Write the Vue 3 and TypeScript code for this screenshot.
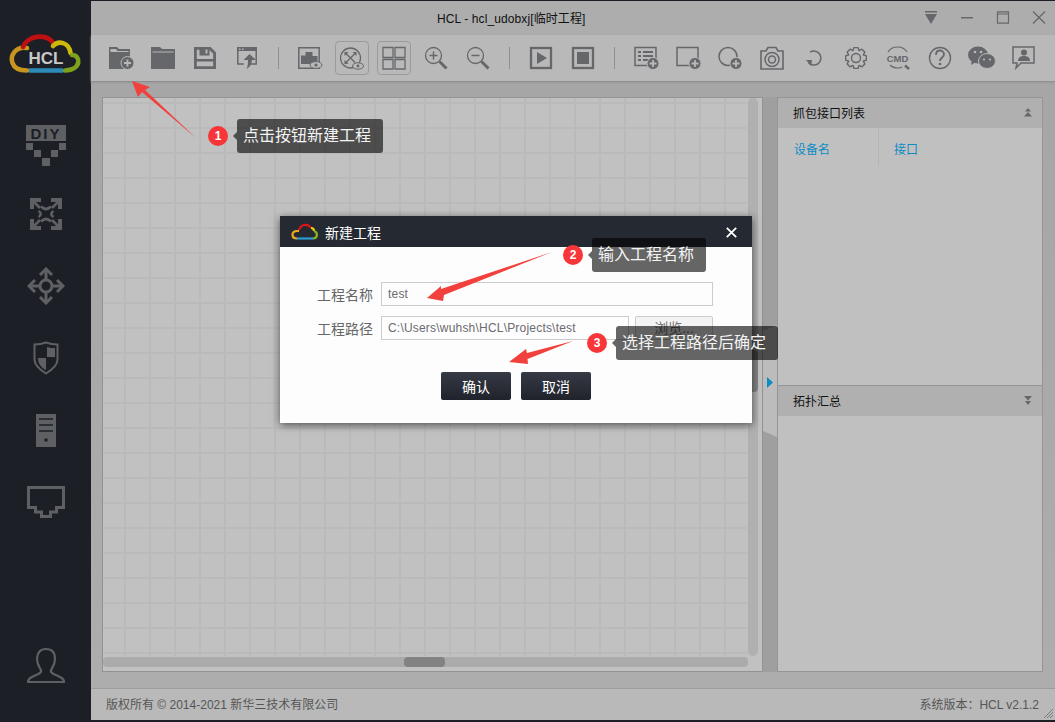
<script setup lang="ts">
const grey = '#66676b'
const bar = '#b9b9b9'

// 8 tooth outline for the settings icon
function gearPath(cx: number, cy: number, outer: number, inner: number): string {
  const pts: string[] = []
  for (let i = 0; i < 8; i++) {
    const a = (i * Math.PI) / 4
    const steps: [number, number][] = [
      [inner, a - 0.39],
      [outer, a - 0.2],
      [outer, a + 0.2],
      [inner, a + 0.39]
    ]
    for (const [r, t] of steps) {
      pts.push(`${(cx + r * Math.cos(t)).toFixed(1)} ${(cy + r * Math.sin(t)).toFixed(1)}`)
    }
  }
  return 'M' + pts.join('L') + 'Z'
}
const gear = gearPath(11, 11, 10.6, 8)
</script>

<template>
  <div class="app">
    <aside class="side">
      <svg class="logo" width="72" height="42" viewBox="0 0 72 42" fill="none" stroke-width="4.6">
        <path d="M17 15C5 13 0 23 2.500 30 4.500 36 10 37.500 17 37.500" stroke="#c8951f" stroke-linecap="round" />
        <path d="M13 14C17 3 36-1 44 11" stroke="#be0f12" stroke-linecap="round" />
        <path d="M43 13C48 7 59 9 60.500 20" stroke="#ccb90b" stroke-linecap="round" />
        <path d="M62 22C71 22 72 37 55 37.500" stroke="#7ea21c" stroke-linecap="round" />
        <path d="M19 37.500H53" stroke="#2d8bb8" />
        <text x="36" y="31" text-anchor="middle" class="logo-text">HCL</text>
      </svg>

      <div class="side-icons">
        <div class="side-item first">
          <svg class="diy-icon" width="42" height="41" viewBox="0 0 42 41">
            <rect x="1" y="0" width="40" height="16" fill="#5f6064" />
            <text x="21" y="13.500" text-anchor="middle" class="diy">DIY</text>
            <path fill="#5f6064" d="M1 18h7v7H1zM34 18h7v7h-7zM9 25h7v7H9zM26 25h7v7h-7zM17 33h8v8h-8z" />
          </svg>
        </div>
        <div class="side-item">
          <svg width="32" height="32" viewBox="0 0 32 32" fill="none" stroke="#5f6064" stroke-width="2.600">
            <path fill="#5f6064" stroke="none" d="M0 0h11v4H4v7H0zM32 0H21v4h7v7h4zM0 32h11v-4H4v-7H0zM32 32H21v-4h7v-7h4z" />
            <path d="M3 3l7 7M29 3l-7 7M3 29l7-7M29 29l-7-7" />
            <path d="M11 8.500Q16 13.500 21 8.500M11 23.500Q16 18.500 21 23.500M8.500 13Q13 16 8.500 19M23.500 13Q19 16 23.500 19" />
          </svg>
        </div>
        <div class="side-item">
          <svg width="38" height="38" viewBox="0 0 38 38" fill="none" stroke="#5f6064" stroke-width="3">
            <circle cx="19" cy="19" r="6" />
            <path d="M19 3v10M19 25v10M3 19h10M25 19h10" />
            <path d="M13 8l6-6 6 6M13 30l6 6 6-6M8 13l-6 6 6 6M30 13l6 6-6 6" />
          </svg>
        </div>
        <div class="side-item">
          <svg width="26" height="34" viewBox="0 0 26 34">
            <path fill="none" stroke="#5f6064" stroke-width="2" d="M13 1.500c4 1.500 8 2 11.500 2v15c0 6-5 10-11.500 14C6.500 28.500 1.500 24.500 1.500 18.500v-15C5 3.500 9 3 13 1.500z" />
            <path fill="#5f6064" d="M14 6c3 1 5 1 8 1v9h-8zM5 17h8v12c-4-2-8-6-8-12z" />
          </svg>
        </div>
        <div class="side-item">
          <svg width="20" height="33" viewBox="0 0 20 33">
            <rect width="20" height="33" fill="#5f6064" />
            <path d="M3 5h14M3 11h14M3 17h14" stroke="#1c1f25" stroke-width="1.500" />
            <circle cx="10" cy="26" r="1.800" fill="#1c1f25" />
          </svg>
        </div>
        <div class="side-item">
          <svg width="38" height="32" viewBox="0 0 38 32">
            <path fill="none" stroke="#5f6064" stroke-width="3" d="M1.500 1.500h35v20h-7v4.500h-6v4.500h-9V26h-6v-4.500h-7z" />
          </svg>
        </div>
      </div>

      <svg class="user" width="38" height="37" viewBox="0 0 38 37">
        <path fill="none" stroke="#5f6064" stroke-width="2.200" stroke-linejoin="round" d="M19 2c6 0 9 4 9 10 0 6-3 9-4 11-1 3 3 4 7 6 4 2 6 3 6 6H1c0-3 2-4 6-6s8-3 7-6c-1-2-4-5-4-11 0-6 3-10 9-10z" />
      </svg>
    </aside>

    <div class="main">
      <header class="titlebar">
        <span class="title">HCL - hcl_udobxj[临时工程]</span>
        <div class="win-btns">
          <svg width="14" height="13" viewBox="0 0 14 13"><path :fill="grey" d="M1 0h12v1.500H1zM1 3h12L7 13z" /></svg>
          <svg width="14" height="13" viewBox="0 0 14 13"><path :fill="grey" d="M1 6h12v1.500H1z" /></svg>
          <svg width="14" height="13" viewBox="0 0 14 13"><path fill="none" :stroke="grey" stroke-width="1.200" d="M1.500.8v11.400h11V.8zM1.500 3h11" /></svg>
          <svg width="14" height="13" viewBox="0 0 14 13"><path fill="none" :stroke="grey" stroke-width="1.300" d="M1 .5l12 12M13 .5l-12 12" /></svg>
        </div>
      </header>

      <nav class="toolbar">
        <div class="tool"><svg width="26" height="24" viewBox="0 0 26 24"><path :fill="grey" d="M1 1h8l2 2h11v20H1z" /><path :fill="bar" d="M2.500 3h5.500l1.500 2h11v1H2.500z" /><circle cx="19.500" cy="17" r="6.500" :fill="grey" :stroke="bar" /><path d="M16 17h7M19.500 13.500v7" :stroke="bar" stroke-width="1.800" /></svg></div>
        <div class="tool"><svg width="26" height="24" viewBox="0 0 26 24"><path :fill="grey" d="M1 1h9l2 2h13v20H1z" /><path :fill="bar" d="M2.500 5.500h21v1h-21z" /></svg></div>
        <div class="tool"><svg width="24" height="24" viewBox="0 0 24 24"><path fill="none" :stroke="grey" stroke-width="2.800" d="M2.400 2.400h14.600l4.600 4.600v14.600H2.400z" /><path :fill="grey" d="M6.500 2h10v7.500h-10zM2 13h20v2.400H2z" /><path :fill="bar" d="M12.500 3.500h2v4h-2z" /></svg></div>
        <div class="tool"><svg width="24" height="24" viewBox="0 0 24 24"><path :fill="grey" d="M2 1h20v4H2z" /><path :fill="bar" d="M4 2.500h1.500V4H4zM7 2.500h1.500V4H7z" /><path fill="none" :stroke="grey" stroke-width="1.500" d="M2.800 4v14h6M21.200 4v14h-6" /><path :fill="grey" d="M14.500 8l6.500 6h-4c0 4-2 7-5.500 9 1.500-3 1.500-6 1.500-9H8.500z" /></svg></div>
        <i class="sep"></i>
        <div class="tool"><svg width="26" height="24" viewBox="0 0 26 24"><path fill="none" :stroke="grey" stroke-width="1.500" d="M1.800 1.800h20.400v20.400H1.800z" /><path :fill="grey" d="M4 9.500h4.500V6h7v4h5v8H4z" /><ellipse cx="19" cy="19" rx="6" ry="3.400" :fill="bar" :stroke="grey" /><circle cx="19" cy="19" r="1.600" :fill="grey" /></svg></div>
        <div class="tool boxed"><svg width="24" height="24" viewBox="0 0 24 24"><circle cx="10.500" cy="12" r="10" fill="none" :stroke="grey" stroke-width="1.300" /><path fill="none" :stroke="grey" stroke-width="1.300" d="M6 7.500l9 9M15 7.500l-9 9" /><path :fill="grey" d="M4.500 6h4l-4 4zM16.500 6h-4l4 4zM4.500 18h4l-4-4z" /><ellipse cx="18" cy="20" rx="5.500" ry="3.200" :fill="bar" :stroke="grey" /><circle cx="18" cy="20" r="1.400" :fill="grey" /></svg></div>
        <div class="tool boxed"><svg width="24" height="24" viewBox="0 0 24 24"><path fill="none" :stroke="grey" stroke-width="1.300" d="M1 1.500h10v10H1zM13 1.500h10v10H13zM1 13.500h10v9.500H1zM13 13.500h10v9.500H13z" /></svg></div>
        <div class="tool"><svg width="24" height="24" viewBox="0 0 24 24"><circle cx="9.500" cy="9.500" r="8" fill="none" :stroke="grey" stroke-width="1.300" /><path :stroke="grey" stroke-width="1.500" d="M5.500 9.500h8M9.500 5.500v8" /><path :stroke="grey" stroke-width="3" d="M15.500 15.500l7 7" /></svg></div>
        <div class="tool"><svg width="24" height="24" viewBox="0 0 24 24"><circle cx="9.500" cy="9.500" r="8" fill="none" :stroke="grey" stroke-width="1.300" /><path :stroke="grey" stroke-width="1.500" d="M5.500 9.500h8" /><path :stroke="grey" stroke-width="3" d="M15.500 15.500l7 7" /></svg></div>
        <i class="sep"></i>
        <div class="tool"><svg width="24" height="24" viewBox="0 0 24 24"><rect x="2" y="2" width="20" height="20" fill="none" :stroke="grey" stroke-width="2.300" /><path :fill="grey" d="M8 6l10 6-10 6z" /></svg></div>
        <div class="tool"><svg width="24" height="24" viewBox="0 0 24 24"><rect x="2" y="2" width="20" height="20" fill="none" :stroke="grey" stroke-width="2.300" /><rect x="6" y="6" width="12" height="12" :fill="grey" /></svg></div>
        <i class="sep"></i>
        <div class="tool"><svg width="26" height="24" viewBox="0 0 26 24"><path fill="none" :stroke="grey" stroke-width="1.500" d="M2 1.500h21v18H2z" /><path :stroke="grey" stroke-width="1.800" d="M5 6h3M10 6h10M5 10h3M10 10h10M5 14h3M10 14h5" /><circle cx="20" cy="17.500" r="6" :fill="grey" :stroke="bar" /><path d="M16.500 17.500h7M20 14v7" :stroke="bar" stroke-width="1.800" /></svg></div>
        <div class="tool"><svg width="26" height="24" viewBox="0 0 26 24"><path fill="none" :stroke="grey" stroke-width="1.500" d="M2 1.500h21v18H2z" /><circle cx="20" cy="17.500" r="6" :fill="grey" :stroke="bar" /><path d="M16.500 17.500h7M20 14v7" :stroke="bar" stroke-width="1.800" /></svg></div>
        <div class="tool"><svg width="26" height="24" viewBox="0 0 26 24"><circle cx="11" cy="10.500" r="9" fill="none" :stroke="grey" stroke-width="1.500" /><circle cx="19" cy="17.500" r="6" :fill="grey" :stroke="bar" /><path d="M15.500 17.500h7M19 14v7" :stroke="bar" stroke-width="1.800" /></svg></div>
        <div class="tool"><svg width="24" height="24" viewBox="0 0 24 24"><path fill="none" :stroke="grey" stroke-width="1.600" d="M1 5h5l2-3.500h8L18 5h5v18H1z" /><circle cx="12" cy="13.500" r="7" fill="none" :stroke="grey" stroke-width="1.500" /><circle cx="12" cy="13.500" r="3.500" fill="none" :stroke="grey" stroke-width="1.500" /></svg></div>
        <div class="tool"><svg width="18" height="18" viewBox="0 0 18 18"><path fill="none" :stroke="grey" stroke-width="1.500" d="M5 3.200A7 7 0 1 1 3.500 13.500" /><path :fill="grey" d="M1 11h6l-1 6z" /></svg></div>
        <div class="tool"><svg width="22" height="22" viewBox="0 0 22 22"><circle cx="11" cy="11" r="4.500" fill="none" :stroke="grey" stroke-width="1.400" /><path fill="none" :stroke="grey" stroke-width="1.400" stroke-linejoin="round" :d="gear" /></svg></div>
        <div class="tool"><svg width="26" height="24" viewBox="0 0 26 24"><text x="12.500" y="15.500" text-anchor="middle" class="cmd">CMD</text><path fill="none" :stroke="grey" stroke-width="1.200" d="M3 6C5 2.500 9 1 12.500 1S20 2.500 22 6M5 19c2 2 5 3 8 3 1.500 0 3-.3 4-1" /><path :stroke="grey" stroke-width="2.400" d="M20 19.500l4 3.500" /></svg></div>
        <div class="tool"><svg width="24" height="24" viewBox="0 0 24 24"><circle cx="12" cy="12" r="10.500" fill="none" :stroke="grey" stroke-width="1.400" /><path fill="none" :stroke="grey" stroke-width="1.800" d="M8 9c0-3 2-4.500 4-4.500S16 6 16 8.500c0 3-4 3-4 6.500" /><circle cx="12" cy="18" r="1.300" :fill="grey" /></svg></div>
        <div class="tool"><svg width="28" height="24" viewBox="0 0 28 24"><ellipse cx="10" cy="9" rx="10" ry="8.500" :fill="grey" /><path :fill="grey" d="M4 14l-1 5 5-3z" /><ellipse cx="19" cy="15" rx="8.500" ry="7.500" :fill="grey" :stroke="bar" /><circle cx="7" cy="6" r="1.300" :fill="bar" /><circle cx="13" cy="6" r="1.300" :fill="bar" /><circle cx="16" cy="13.500" r="1.100" :fill="bar" /><circle cx="22" cy="13.500" r="1.100" :fill="bar" /></svg></div>
        <div class="tool"><svg width="24" height="24" viewBox="0 0 24 24"><path fill="none" :stroke="grey" stroke-width="1.500" d="M1 1h21v16H9l-5 5 1-5H1z" /><circle cx="12" cy="6.500" r="3" :fill="grey" /><path :fill="grey" d="M6 15c0-4 3-5 6-5s6 1 6 5z" /></svg></div>
      </nav>

      <section class="workspace">
        <div class="canvas">
          <div class="grid"></div>
          <div class="vbar"><i class="vthumb"></i></div>
          <div class="hbar"><i class="hthumb"></i></div>
        </div>

        <div class="splitter">
          <i class="handle"></i>
          <svg class="tri" width="6" height="11" viewBox="0 0 6 11"><path fill="#0b8cc5" d="M0 0l6 5.500L0 11z" /></svg>
        </div>

        <div class="panel">
          <div class="panel-top">
            <div class="panel-head">
              <span>抓包接口列表</span>
              <svg width="8" height="9" viewBox="0 0 8 9"><path :fill="grey" d="M4 0l3 3.500H1zM4 4l4 4.500H0z" /></svg>
            </div>
            <div class="cols">
              <div class="col first">设备名</div>
              <div class="col">接口</div>
            </div>
          </div>
          <div class="panel-bottom">
            <div class="panel-head">
              <span>拓扑汇总</span>
              <svg width="8" height="9" viewBox="0 0 8 9"><path :fill="grey" d="M0 0h8L4 4.500zM1 5h6L4 9z" /></svg>
            </div>
          </div>
        </div>
      </section>

      <footer class="status">
        <span>版权所有 © 2014-2021 新华三技术有限公司</span>
        <span class="ver">系统版本：HCL v2.1.2</span>
        <svg class="grip" width="9" height="9" viewBox="0 0 9 9"><path stroke="#7d7d7d" d="M0 9l9-9M3 9l6-6M6 9l3-3" /></svg>
      </footer>
    </div>

    <div class="dialog">
      <div class="dlg-head">
        <svg width="28" height="18" viewBox="0 0 28 18" fill="none" stroke-width="2.200">
          <path d="M6 15.500C0 15.500 0 8 6 8h2" stroke="#f0a81c" />
          <path d="M8 7C10 1 17 0 20 5" stroke="#d5161b" />
          <path d="M20 5c2 0 3 1 3 3" stroke="#e6d00f" />
          <path d="M23 8c4 1 4 7.500-1 7.500" stroke="#8ab51f" />
          <path d="M6 15.500h16" stroke="#2d9bd6" />
        </svg>
        <span class="dlg-title">新建工程</span>
        <svg class="dlg-close" width="11" height="11" viewBox="0 0 11 11"><path stroke="#fff" stroke-width="1.800" d="M.8.8l9.400 9.400M10.200.8L.8 10.200" /></svg>
      </div>
      <div class="dlg-body">
        <div class="row">
          <label>工程名称</label>
          <div class="input wide">test</div>
        </div>
        <div class="row">
          <label>工程路径</label>
          <div class="input path">C:\Users\wuhsh\HCL\Projects\test</div>
          <div class="browse">浏览...</div>
        </div>
        <div class="btns">
          <button class="btn">确认</button>
          <button class="btn">取消</button>
        </div>
      </div>
    </div>

    <svg class="arrows" width="1055" height="722" viewBox="0 0 1055 722">
      <path fill="#f2403c" d="M196 138L145 90l5-3-18-6 6 16 4-5z" />
      <path fill="#f2403c" d="M552 252L441 289l0-3-14 12 16 3 1-6z" />
      <path fill="#f2403c" d="M573 341l-46 12-1-4-17 13 19 2-.5-5z" />
    </svg>

    <div class="tip t1"><b class="num">1</b><span class="bubble">点击按钮新建工程</span></div>
    <div class="tip t2"><b class="num">2</b><span class="bubble">输入工程名称</span></div>
    <div class="tip t3"><b class="num">3</b><span class="bubble">选择工程路径后确定</span></div>
  </div>
</template>

<style>
html, body { margin: 0; background: #1c1f25; }
</style>

<style scoped>
* { box-sizing: border-box; }
.app {
  position: relative;
  width: 1055px;
  height: 722px;
  display: flex;
  overflow: hidden;
  font-family: "Liberation Sans", "Noto Sans CJK SC", sans-serif;
  font-size: 12px;
  background: #1c1f25;
}
.side {
  width: 91px;
  flex: none;
  background: #1c1f25;
  display: flex;
  flex-direction: column;
  align-items: center;
  padding-top: 33px;
}
.logo { overflow: visible; }
.logo-text { font: bold 17px "Liberation Sans", sans-serif; fill: #c9c9c9; stroke: none; }
.diy { font: bold 15px "Liberation Sans", sans-serif; fill: #1c1f25; letter-spacing: 2px; }
.cmd { font: bold 9.500px "Liberation Sans", sans-serif; fill: #66676b; }
.side-icons { margin-top: 35px; display: flex; flex-direction: column; }
.side-item { height: 72px; width: 91px; display: flex; justify-content: center; align-items: center; }
.side-item.first { height: 68px; }
.diy-icon { margin-top: 2px; }
.user { margin-top: auto; margin-bottom: 38px; }
.main {
  flex: 1;
  display: flex;
  flex-direction: column;
  margin: 1px 0 2px;
  background: #acacac;
  min-width: 0;
}
.titlebar {
  height: 34px;
  flex: none;
  background: #adadad;
  display: flex;
  align-items: center;
  padding: 0 9px 2px 0;
}
.title { margin-left: 346px; font-size: 12px; letter-spacing: 0.1px; color: #111; }
.win-btns { margin-left: auto; display: flex; gap: 22px; }
.toolbar {
  height: 47px;
  flex: none;
  background: #b9b9b9;
  border-bottom: 1px solid #8e8e8e;
  box-shadow: 0 1px 2px #9a9a9a;
  display: flex;
  align-items: center;
  padding-left: 9px;
  position: relative;
}
.tool { width: 42px; height: 34px; display: flex; align-items: center; justify-content: center; flex: none; }
.tool.boxed { width: 34px; margin: 0 4px; border: 1px solid #9b9b9b; border-radius: 4px; }
.sep { width: 1px; height: 22px; background: #8f8f8f; margin: 0 10px; flex: none; }
.workspace {
  flex: 1;
  display: flex;
  padding: 15px 12px 16px 11px;
  min-height: 0;
  background: linear-gradient(#a6a6a6, #adadad);
}
.canvas {
  width: 661px;
  flex: none;
  position: relative;
  border: 1px solid #939393;
  background: #c1c1c1;
  overflow: hidden;
}
.grid {
  position: absolute;
  inset: 0 15px 15px 0;
  background-image:
    linear-gradient(90deg, #bababa 2px, transparent 2px),
    linear-gradient(#bababa 2px, transparent 2px);
  background-size: 25px 25px;
  background-position: 21px 4px;
}
.vbar {
  position: absolute;
  right: 4px;
  top: 0;
  bottom: 15px;
  width: 10px;
  background: #b0b0b0;
  border-radius: 5px;
}
.vthumb { position: absolute; left: 0; right: 0; top: 252px; height: 42px; background: #828282; border-radius: 4px; }
.hbar {
  position: absolute;
  left: 0;
  right: 14px;
  bottom: 4px;
  height: 10px;
  background: #ababab;
  border-radius: 4px;
}
.hthumb { position: absolute; left: 301px; width: 41px; top: 0; bottom: 0; background: #828282; border-radius: 4px; }
.splitter {
  width: 14px;
  flex: none;
  position: relative;
  background: #9f9f9f;
}
.handle {
  position: absolute;
  left: 0;
  right: 0;
  top: 228px;
  height: 112px;
  background: #bcbcbc;
  clip-path: polygon(0 6px, 100% 0, 100% 100%, 0 calc(100% - 6px));
}
.tri { position: absolute; left: 4px; top: 280px; }
.panel {
  width: 266px;
  flex: none;
  border: 1px solid #959595;
  background: #c0c0c0;
  display: flex;
  flex-direction: column;
}
.panel-top { height: 288px; border-bottom: 1px solid #959595; }
.panel-head {
  height: 30px;
  background: #b0b0b0;
  display: flex;
  align-items: center;
  justify-content: space-between;
  padding: 0 10px 2px 15px;
  color: #111;
  font-size: 12px;
}
.cols { display: flex; height: 38px; }
.col { color: #0b8cc5; padding: 12px 0 0 15px; width: 100px; font-size: 12px; }
.col.first { width: 101px; padding-left: 16px; border-right: 1px solid #b4b4b4; }
.panel-bottom { flex: 1; }
.status {
  height: 32px;
  flex: none;
  background: #b9b9b9;
  border-top: 1px solid #9d9d9d;
  display: flex;
  align-items: center;
  justify-content: space-between;
  padding: 0 16px 2px 15px;
  color: #555;
  font-size: 12px;
  position: relative;
}
.grip { position: absolute; right: 2px; bottom: 2px; }
.dialog {
  position: absolute;
  left: 280px;
  top: 216px;
  width: 472px;
  height: 207px;
  background: #fdfdfd;
  box-shadow: 0 2px 8px rgba(0, 0, 0, 0.6);
}
.dlg-head {
  height: 31px;
  background: #252932;
  display: flex;
  align-items: center;
  padding: 0 15px 0 11px;
}
.dlg-title { color: #fff; font-size: 14px; margin-left: 6px; }
.dlg-close { margin-left: auto; margin-top: 1px; }
.dlg-body { padding: 35px 39px 0 37px; }
.row { display: flex; align-items: center; height: 24px; margin-bottom: 10px; }
.row label { width: 56px; margin-right: 8px; font-size: 14px; color: #666; flex: none; }
.input {
  height: 24px;
  border: 1px solid #ccc;
  line-height: 22px;
  padding-left: 6px;
  color: #6b6b70;
  font-size: 12px;
  letter-spacing: 0.2px;
}
.input.wide { flex: 1; }
.input.path { width: 248px; }
.browse {
  width: 78px;
  height: 24px;
  margin-left: 6px;
  border: 1px solid #ccc;
  border-radius: 2px;
  background: #f3f3f3;
  color: #777;
  font-size: 14px;
  line-height: 22px;
  text-align: center;
}
.btns { display: flex; justify-content: center; gap: 10px; margin-top: 32px; padding-left: 2px; }
.btn {
  width: 70px;
  height: 28px;
  border: 0;
  border-radius: 2px;
  background: linear-gradient(#363a45, #20232b);
  color: #fff;
  font: 14px "Liberation Sans", "Noto Sans CJK SC", sans-serif;
}
.arrows { position: absolute; left: 0; top: 0; pointer-events: none; }
.tip { position: absolute; display: flex; align-items: center; }
.t1 { left: 208px; top: 119px; }
.t2 { left: 563px; top: 238px; }
.t3 { left: 587px; top: 326px; }
.num {
  width: 20px;
  height: 20px;
  border-radius: 50%;
  background: #f83538;
  color: #fff;
  font: bold 12px/20px "Liberation Sans", sans-serif;
  text-align: center;
  margin-right: 9px;
}
.bubble {
  position: relative;
  height: 34px;
  line-height: 33px;
  padding: 0 12px 0 6px;
  border-radius: 3px;
  background: rgba(0, 0, 0, 0.6);
  color: #f4f4f4;
  font-size: 16px;
}
.bubble::before {
  content: "";
  position: absolute;
  left: -4px;
  top: 13px;
  border: 4px solid transparent;
  border-left: 0;
  border-right-color: rgba(0, 0, 0, 0.6);
}
</style>
